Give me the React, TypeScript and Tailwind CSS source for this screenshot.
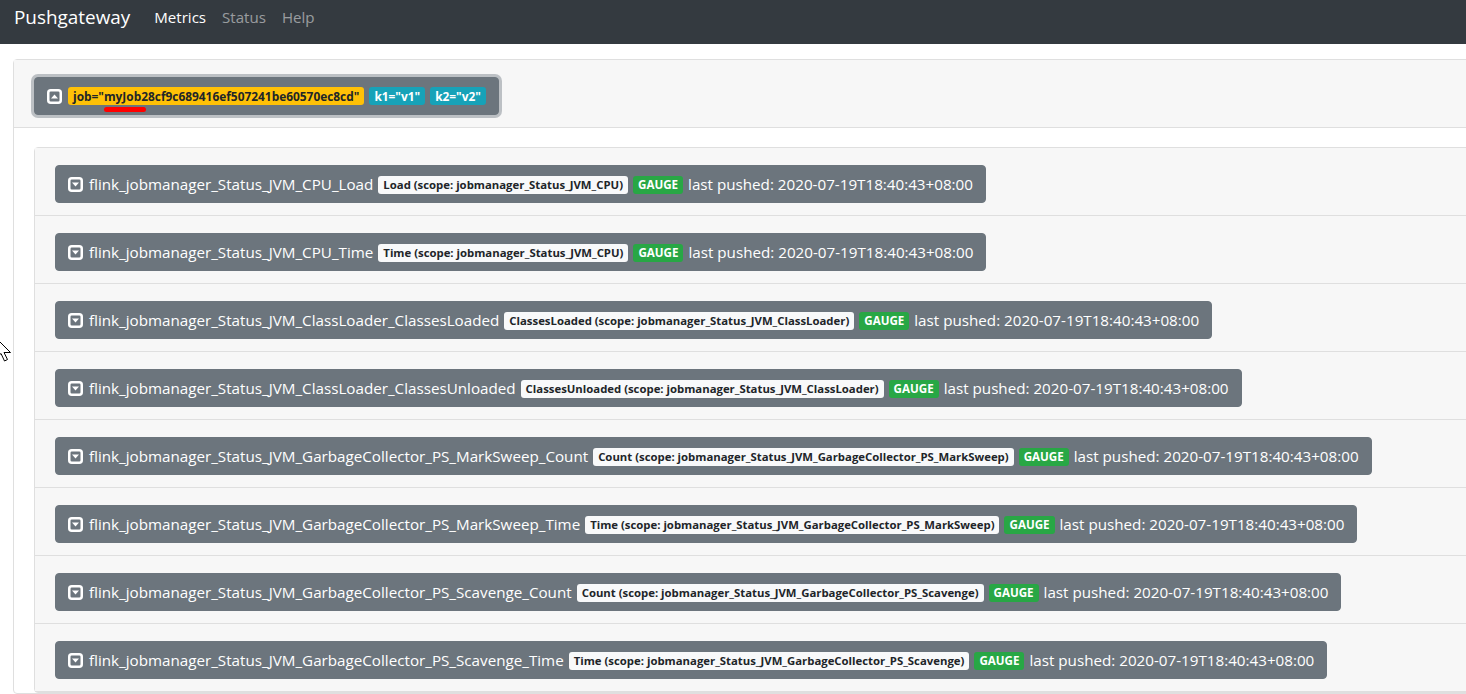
import React from "react";

const rows: [string, string][] = [
  ["flink_jobmanager_Status_JVM_CPU_Load", "Load (scope: jobmanager_Status_JVM_CPU)"],
  ["flink_jobmanager_Status_JVM_CPU_Time", "Time (scope: jobmanager_Status_JVM_CPU)"],
  ["flink_jobmanager_Status_JVM_ClassLoader_ClassesLoaded", "ClassesLoaded (scope: jobmanager_Status_JVM_ClassLoader)"],
  ["flink_jobmanager_Status_JVM_ClassLoader_ClassesUnloaded", "ClassesUnloaded (scope: jobmanager_Status_JVM_ClassLoader)"],
  ["flink_jobmanager_Status_JVM_GarbageCollector_PS_MarkSweep_Count", "Count (scope: jobmanager_Status_JVM_GarbageCollector_PS_MarkSweep)"],
  ["flink_jobmanager_Status_JVM_GarbageCollector_PS_MarkSweep_Time", "Time (scope: jobmanager_Status_JVM_GarbageCollector_PS_MarkSweep)"],
  ["flink_jobmanager_Status_JVM_GarbageCollector_PS_Scavenge_Count", "Count (scope: jobmanager_Status_JVM_GarbageCollector_PS_Scavenge)"],
  ["flink_jobmanager_Status_JVM_GarbageCollector_PS_Scavenge_Time", "Time (scope: jobmanager_Status_JVM_GarbageCollector_PS_Scavenge)"],
];

function CaretSquare({ up }: { up?: boolean }) {
  return (
    <svg width="15" height="15" viewBox="0 0 15 15" className="shrink-0">
      <rect x="1.25" y="1.25" width="12.5" height="12.5" rx="2.5" fill="none" stroke="white" strokeWidth="2.5" />
      {up ? (
        <polygon points="4,9.5 11,9.5 7.5,5.5" fill="white" />
      ) : (
        <polygon points="4,5.5 11,5.5 7.5,9.5" fill="white" />
      )}
    </svg>
  );
}

export default function App() {
  return (
    <div className="relative h-screen overflow-hidden bg-white font-['Open_Sans',sans-serif] text-[#212529]">
      <nav className="flex h-[44px] items-start bg-[#343a40] px-[14px]">
        <span className="mr-4 mt-[2px] text-[18.9px] leading-[30px] text-white">Pushgateway</span>
        <span className="mt-[5px] px-2 text-[15.1px] leading-[24px] text-white">Metrics</span>
        <span className="mt-[5px] px-2 text-[15.1px] leading-[24px] text-white/50">Status</span>
        <span className="mt-[5px] px-2 text-[15.1px] leading-[24px] text-white/50">Help</span>
      </nav>

      <div className="pl-[13px] pt-[15px]">
        <div className="w-[1520px] rounded-[4px] border border-[#dfdfdf]">
          <div className="border-b border-[#dfdfdf] bg-[#f7f7f7] px-5 pb-[12px] pt-[17px]">
            <div className="relative inline-flex h-[38px] items-center gap-[5px] rounded-[4px] border border-[#6c757d] bg-[#6c757d] px-3 shadow-[0_0_0_3px_rgba(130,138,145,0.5)]">
              <CaretSquare up />
              <span className="ml-[1px] rounded-[3px] bg-[#ffc107] px-[5px] py-[3px] text-[11.9px] font-bold leading-[12px] text-[#212529]">
                job="myJob28cf9c689416ef507241be60570ec8cd"
              </span>
              <span className="rounded-[3px] bg-[#17a2b8] px-[5px] py-[3px] text-[11.9px] font-bold leading-[12px] text-white">
                k1="v1"
              </span>
              <span className="rounded-[3px] bg-[#17a2b8] px-[5px] py-[3px] text-[11.9px] font-bold leading-[12px] text-white">
                k2="v2"
              </span>
              <span className="absolute left-[69px] top-[29px] h-[5px] w-[42px] rounded-full bg-[#ff0000]" />
            </div>
          </div>
          <div className="pl-5 pt-[19px]">
            <div className="rounded-[4px] border border-[#dfdfdf]">
              {rows.map(([name, help]) => (
                <div key={name} className="border-b border-[#dfdfdf] bg-[#f7f7f7] px-5 pb-[12px] pt-[17px]">
                  <div className="inline-flex h-[38px] items-center gap-[5px] rounded-[4px] border border-[#6c757d] bg-[#6c757d] px-3 text-[15.2px] leading-[24px] text-white">
                    <CaretSquare />
                    <span className="ml-[1px] whitespace-nowrap">{name}</span>
                    <span className="mt-[1px] whitespace-nowrap rounded-[3px] bg-[#f8f9fa] px-[5px] py-[3px] text-[11.35px] font-bold leading-[12px] text-[#212529]">
                      {help}
                    </span>
                    <span className="mt-[1px] rounded-[3px] bg-[#28a745] px-[5px] py-[3px] text-[11.6px] font-bold leading-[12px] text-white">
                      GAUGE
                    </span>
                    <span className="whitespace-nowrap">last pushed: 2020-07-19T18:40:43+08:00</span>
                  </div>
                </div>
              ))}
            </div>
          </div>
        </div>
      </div>

      <svg className="absolute left-0 top-[338px]" width="14" height="30" viewBox="0 0 14 30">
        <path d="M-4 0 L-4 20 L1 15.5 L4.5 23 L7.5 21.5 L4 14.5 L10.5 14.5 Z" fill="white" stroke="black" strokeWidth="1" strokeLinejoin="round" />
      </svg>
    </div>
  );
}
